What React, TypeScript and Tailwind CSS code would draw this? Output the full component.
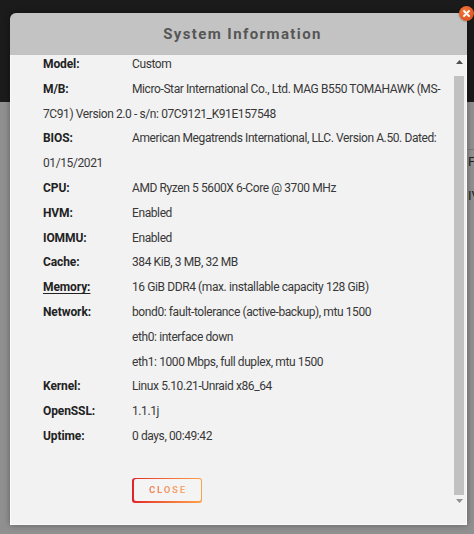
import React from 'react';

type Row = { label: string; lines: string[]; link?: boolean };

const rows: Row[] = [
  { label: 'Model:', lines: ['Custom'] },
  { label: 'M/B:', lines: ['Micro-Star International Co., Ltd. MAG B550 TOMAHAWK (MS-7C91) Version 2.0 - s/n: 07C9121_K91E157548'] },
  { label: 'BIOS:', lines: ['American Megatrends International, LLC. Version A.50. Dated: 01/15/2021'] },
  { label: 'CPU:', lines: ['AMD Ryzen 5 5600X 6-Core @ 3700 MHz'] },
  { label: 'HVM:', lines: ['Enabled'] },
  { label: 'IOMMU:', lines: ['Enabled'] },
  { label: 'Cache:', lines: ['384 KiB, 3 MB, 32 MB'] },
  { label: 'Memory:', lines: ['16 GiB DDR4 (max. installable capacity 128 GiB)'], link: true },
  {
    label: 'Network:',
    lines: [
      'bond0: fault-tolerance (active-backup), mtu 1500',
      'eth0: interface down',
      'eth1: 1000 Mbps, full duplex, mtu 1500',
    ],
  },
  { label: 'Kernel:', lines: ['Linux 5.10.21-Unraid x86_64'] },
  { label: 'OpenSSL:', lines: ['1.1.1j'] },
  { label: 'Uptime:', lines: ['0 days, 00:49:42'] },
];

const InfoRow = ({ row }: { row: Row }) => (
  <div>
    {row.lines.map((line, i) => (
      <div key={i}>
        <span
          className={`inline-block w-[89px] font-bold tracking-[-0.1px] text-[#222] ${row.link && i === 0 ? 'underline underline-offset-2' : ''}`}
        >
          {i === 0 ? row.label : '\u00a0'}
        </span>
        {line}
      </div>
    ))}
  </div>
);

export default function App() {
  return (
    <div
      className="relative h-[534px] w-[474px] overflow-hidden bg-[#8e8e8e]"
      style={{ fontFamily: 'Roboto, "Noto Sans", sans-serif' }}
    >
      {/* page behind the overlay */}
      <div className="h-[102px] bg-[#1c1b1c]" />
      <div className="h-[432px] bg-[#909090] pl-[468px] whitespace-nowrap text-[13px] text-[#222]">
        <div className="h-[48px] border-b border-[#7a7a7a]" />
        <div className="pt-[2px]">F</div>
        <div className="pt-[14px]">IV</div>
      </div>

      {/* modal */}
      <div className="absolute left-[10px] top-[13px] flex h-[512px] w-[457px] flex-col rounded-t-[6px] shadow-[0_0_6px_rgba(0,0,0,0.35)]">
        <div className="flex h-[42px] items-center justify-center rounded-t-[6px] bg-[#c3c3c3] pl-[8px]">
          <h1 className="pt-[1px] text-[15px] font-bold tracking-[1.4px] text-[#565656]">System Information</h1>
        </div>
        <div className="flex flex-1 overflow-hidden border-x border-b border-[#fbfbfb] bg-[#f2f2f2]">
          <div className="flex-1 overflow-hidden pl-[32px] pr-[10px]">
            <div className="-mt-[3px] text-[12px] leading-[24.8px] tracking-[-0.4px] text-[#383838]">
              {rows.map((row) => (
                <InfoRow key={row.label} row={row} />
              ))}
            </div>
            <div className="ml-[89px] mt-[29px] h-[25px] w-[70px] rounded-[3px] bg-gradient-to-r from-[#e0202a] to-[#ffa04a] p-[1.5px]">
              <button className="flex h-full w-full items-center justify-center rounded-[2px] bg-[#f4f4f4]">
                <span className="bg-gradient-to-r from-[#ef7a55] to-[#f6ad70] bg-clip-text pl-[2px] text-[9.5px] font-bold tracking-[1.8px] text-transparent">
                  CLOSE
                </span>
              </button>
            </div>
          </div>
          <div className="flex w-[12px] flex-col items-center pt-[5px] mr-[1px]">
            <svg width="7" height="4" viewBox="0 0 7 4">
              <path d="M3.5 0L7 4H0z" fill="#505050" />
            </svg>
            <div className="mt-[12px] h-[419px] w-[10px] bg-[#c1c1c1]" />
            <svg className="mt-[4px]" width="7" height="4" viewBox="0 0 7 4">
              <path d="M0 0h7L3.5 4z" fill="#909090" />
            </svg>
          </div>
        </div>
      </div>

      {/* close badge */}
      <div className="absolute left-[459px] top-[6px] flex h-[15px] w-[15px] items-center justify-center rounded-full bg-[radial-gradient(circle_at_40%_35%,#f47a3a,#d4461a)] shadow-[0_0_2px_rgba(0,0,0,0.5)]">
        <svg width="7" height="7" viewBox="0 0 7 7">
          <path d="M1 1l5 5M6 1L1 6" stroke="#fff" strokeWidth="1.8" strokeLinecap="round" />
        </svg>
      </div>
    </div>
  );
}
